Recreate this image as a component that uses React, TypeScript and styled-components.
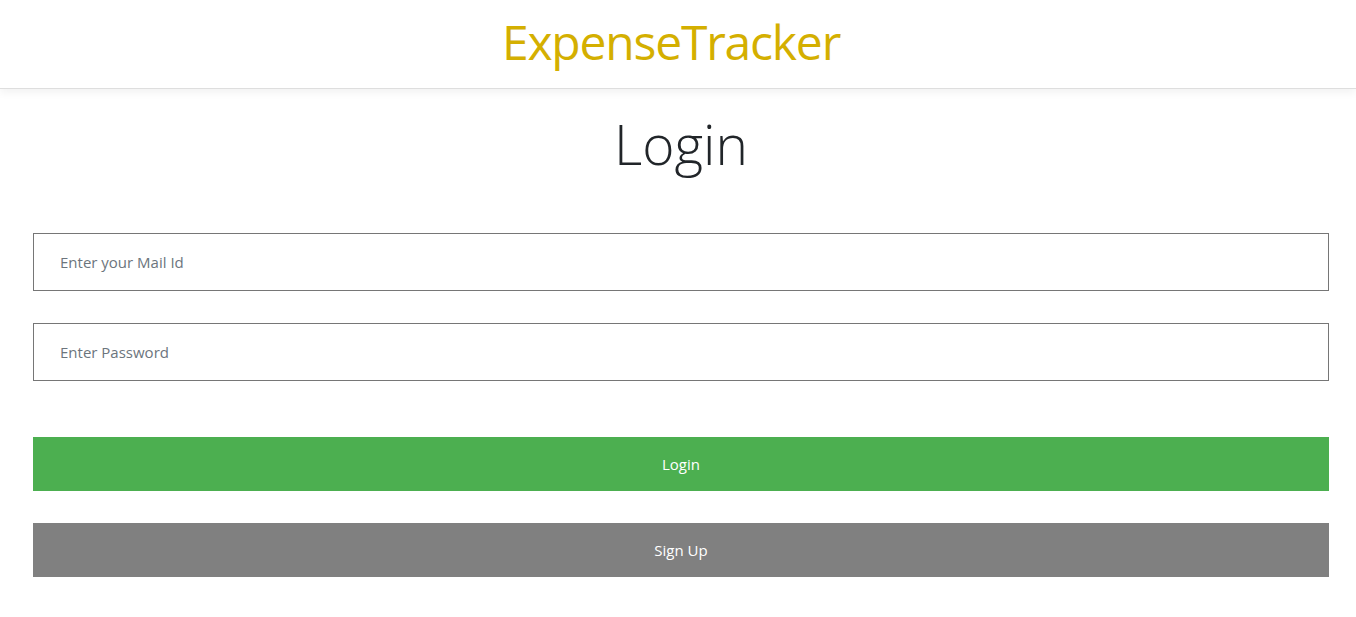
import React from 'react';
import styled, { createGlobalStyle } from 'styled-components';

const GlobalStyle = createGlobalStyle`
  body {
    margin: 0;
    background: #fff;
    font-family: "Open Sans", "Noto Sans", "Liberation Sans", sans-serif;
  }
  * {
    box-sizing: border-box;
  }
`;

const Header = styled.header`
  height: 89px;
  padding: 0 14px 6px 0;
  display: flex;
  align-items: center;
  justify-content: center;
  border-bottom: 1px solid #dedede;
  box-shadow: 0 4px 8px rgba(0, 0, 0, 0.05);
`;

const Brand = styled.h1`
  margin: 0;
  font-size: 48px;
  font-weight: 400;
  color: #d4af00;
  letter-spacing: -1.2px;
`;

const Main = styled.main`
  padding: 0 27px 0 33px;
  display: flex;
  flex-direction: column;
`;

const Title = styled.h2`
  margin: 22px 0 56px;
  text-align: center;
  font-size: 55px;
  font-weight: 300;
  line-height: 1.2;
  color: #212529;
`;

const Form = styled.form`
  display: flex;
  flex-direction: column;
  gap: 32px;
`;

const Input = styled.input`
  height: 58px;
  width: 100%;
  padding: 0 26px;
  border: 1px solid #767676;
  border-radius: 0;
  font-family: inherit;
  font-size: 15px;
  color: #212529;
  outline: none;

  &::placeholder {
    color: #6c757d;
  }
`;

const Button = styled.button<{ $tone: 'green' | 'gray' }>`
  height: 54px;
  width: 100%;
  border: none;
  font-family: inherit;
  font-size: 15px;
  color: #fff;
  background: ${(p) => (p.$tone === 'green' ? '#4caf50' : '#808080')};
  cursor: pointer;
`;

const Spacer = styled.div`
  height: 24px;
  margin-top: -32px;
`;

export default function App() {
  return (
    <>
      <GlobalStyle />
      <Header>
        <Brand>ExpenseTracker</Brand>
      </Header>
      <Main>
        <Title>Login</Title>
        <Form onSubmit={(e) => e.preventDefault()}>
          <Input type="email" placeholder="Enter your Mail Id" />
          <Input type="password" placeholder="Enter Password" />
          <Spacer />
          <Button type="submit" $tone="green">Login</Button>
          <Button type="button" $tone="gray">Sign Up</Button>
        </Form>
      </Main>
    </>
  );
}
